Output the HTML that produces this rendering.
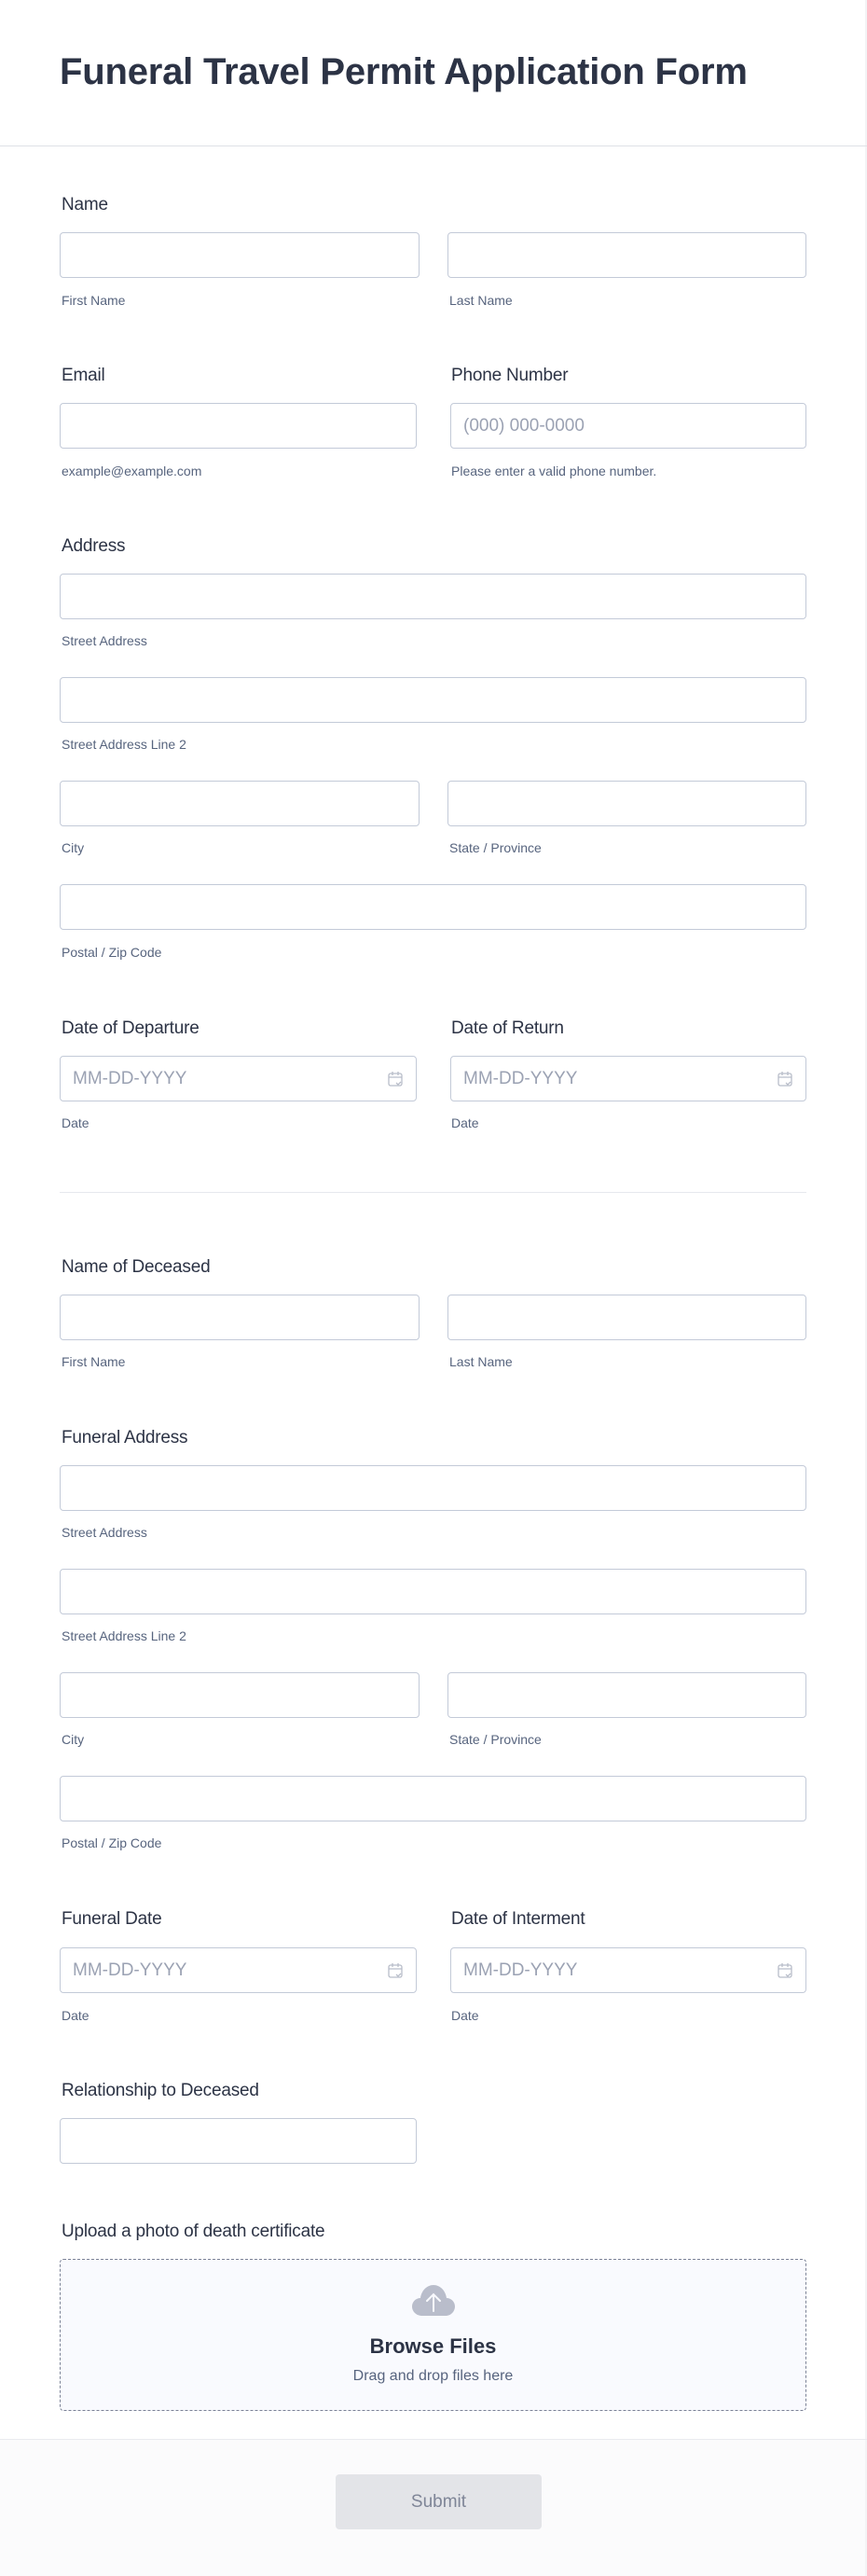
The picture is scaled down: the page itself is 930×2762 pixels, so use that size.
<!DOCTYPE html>
<html><head><meta charset="utf-8"><style>
*{margin:0;padding:0;box-sizing:border-box}
body{width:930px;height:2762px;background:#fff;font-family:"Liberation Sans",sans-serif;position:relative;overflow:hidden}
.a{position:absolute}
h1{position:absolute;left:64px;top:55px;font-size:40px;font-weight:700;color:#2c3345;letter-spacing:-0.2px;white-space:nowrap}
.hl{position:absolute;left:0;width:930px;height:1px;background:#dfe1e6}
.lb{position:absolute;font-size:19px;color:#2c3345;line-height:22px;letter-spacing:-0.2px;margin-top:1px}
.sb{position:absolute;font-size:14px;color:#57647e;line-height:16px}
.in{position:absolute;height:49px;border:1px solid #c3cad8;border-radius:4px;background:#fff}
.ph{position:absolute;left:13px;top:13px;font-size:19px;color:#9ba2b3;line-height:22px}
.cal{position:absolute;right:14px;top:15px}
</style></head><body>
<div class="a" style="right:0;top:0;width:2px;height:2762px;background:#f3f3f5"></div>
<h1>Funeral Travel Permit Application Form</h1>
<div class="hl" style="top:156px"></div>

<div class="lb" style="left:66px;top:208px">Name</div>
<div class="in" style="left:64px;top:249px;width:386px"></div>
<div class="in" style="left:480px;top:249px;width:385px"></div>
<div class="sb" style="left:66px;top:314px">First Name</div>
<div class="sb" style="left:482px;top:314px">Last Name</div>

<div class="lb" style="left:66px;top:391px">Email</div>
<div class="lb" style="left:484px;top:391px">Phone Number</div>
<div class="in" style="left:64px;top:432px;width:383px"></div>
<div class="in" style="left:483px;top:432px;width:382px"><span class="ph">(000) 000-0000</span></div>
<div class="sb" style="left:66px;top:497px">example@example.com</div>
<div class="sb" style="left:484px;top:497px">Please enter a valid phone number.</div>

<div class="lb" style="left:66px;top:574px">Address</div>
<div class="in" style="left:64px;top:615px;width:801px"></div>
<div class="sb" style="left:66px;top:679px">Street Address</div>
<div class="in" style="left:64px;top:726px;width:801px"></div>
<div class="sb" style="left:66px;top:790px">Street Address Line 2</div>
<div class="in" style="left:64px;top:837px;width:386px"></div>
<div class="in" style="left:480px;top:837px;width:385px"></div>
<div class="sb" style="left:66px;top:901px">City</div>
<div class="sb" style="left:482px;top:901px">State / Province</div>
<div class="in" style="left:64px;top:948px;width:801px"></div>
<div class="sb" style="left:66px;top:1013px">Postal / Zip Code</div>

<div class="lb" style="left:66px;top:1091px">Date of Departure</div>
<div class="lb" style="left:484px;top:1091px">Date of Return</div>
<div class="in" style="left:64px;top:1132px;width:383px"><span class="ph">MM-DD-YYYY</span><svg class="cal" width="16" height="18" viewBox="0 0 16 18" fill="none" stroke="#b8bdc9" stroke-width="1.3"><rect x="1" y="3" width="14" height="13" rx="2"/><path d="M1 7h14M5 1v4M11 1v4M9 13l2 2 3-3"/></svg></div>
<div class="in" style="left:483px;top:1132px;width:382px"><span class="ph">MM-DD-YYYY</span><svg class="cal" width="16" height="18" viewBox="0 0 16 18" fill="none" stroke="#b8bdc9" stroke-width="1.3"><rect x="1" y="3" width="14" height="13" rx="2"/><path d="M1 7h14M5 1v4M11 1v4M9 13l2 2 3-3"/></svg></div>
<div class="sb" style="left:66px;top:1196px">Date</div>
<div class="sb" style="left:484px;top:1196px">Date</div>

<div class="a" style="left:64px;top:1278px;width:801px;height:1px;background:#e6e8ee"></div>

<div class="lb" style="left:66px;top:1347px">Name of Deceased</div>
<div class="in" style="left:64px;top:1388px;width:386px"></div>
<div class="in" style="left:480px;top:1388px;width:385px"></div>
<div class="sb" style="left:66px;top:1452px">First Name</div>
<div class="sb" style="left:482px;top:1452px">Last Name</div>

<div class="lb" style="left:66px;top:1530px">Funeral Address</div>
<div class="in" style="left:64px;top:1571px;width:801px"></div>
<div class="sb" style="left:66px;top:1635px">Street Address</div>
<div class="in" style="left:64px;top:1682px;width:801px"></div>
<div class="sb" style="left:66px;top:1746px">Street Address Line 2</div>
<div class="in" style="left:64px;top:1793px;width:386px"></div>
<div class="in" style="left:480px;top:1793px;width:385px"></div>
<div class="sb" style="left:66px;top:1857px">City</div>
<div class="sb" style="left:482px;top:1857px">State / Province</div>
<div class="in" style="left:64px;top:1904px;width:801px"></div>
<div class="sb" style="left:66px;top:1968px">Postal / Zip Code</div>

<div class="lb" style="left:66px;top:2046px">Funeral Date</div>
<div class="lb" style="left:484px;top:2046px">Date of Interment</div>
<div class="in" style="left:64px;top:2088px;width:383px"><span class="ph">MM-DD-YYYY</span><svg class="cal" width="16" height="18" viewBox="0 0 16 18" fill="none" stroke="#b8bdc9" stroke-width="1.3"><rect x="1" y="3" width="14" height="13" rx="2"/><path d="M1 7h14M5 1v4M11 1v4M9 13l2 2 3-3"/></svg></div>
<div class="in" style="left:483px;top:2088px;width:382px"><span class="ph">MM-DD-YYYY</span><svg class="cal" width="16" height="18" viewBox="0 0 16 18" fill="none" stroke="#b8bdc9" stroke-width="1.3"><rect x="1" y="3" width="14" height="13" rx="2"/><path d="M1 7h14M5 1v4M11 1v4M9 13l2 2 3-3"/></svg></div>
<div class="sb" style="left:66px;top:2153px">Date</div>
<div class="sb" style="left:484px;top:2153px">Date</div>

<div class="lb" style="left:66px;top:2230px">Relationship to Deceased</div>
<div class="in" style="left:64px;top:2271px;width:383px"></div>

<div class="lb" style="left:66px;top:2381px">Upload a photo of death certificate</div>
<div class="a" style="left:64px;top:2422px;width:801px;height:163px;border:1px dashed #7b8296;border-radius:4px;background:#f9fafe"></div>
<svg class="a" style="left:441px;top:2449px" width="48" height="36" viewBox="0 0 48 36"><path d="M12 34C5 34 1 29 1 24c0-5 4-9 9-9 1-8 7-14 14-14s13 6 14 14c5 0 9 4 9 9s-4 10-10 10z" fill="#b9bdcb"/><path d="M24 29V11M17 18l7-7 7 7" stroke="#f9fafe" stroke-width="2" fill="none" stroke-linecap="round"/></svg>
<div class="a" style="left:64px;top:2503px;width:801px;text-align:center;font-size:22px;font-weight:700;color:#2c3345">Browse Files</div>
<div class="a" style="left:64px;top:2539px;width:801px;text-align:center;font-size:16px;color:#57647e">Drag and drop files here</div>

<div class="hl" style="top:2615px;background:#eaebef"></div>
<div class="a" style="left:0;top:2616px;width:928px;height:146px;background:#fbfbfc"></div>
<div class="a" style="left:360px;top:2653px;width:221px;height:59px;background:#e3e4e8;border-radius:4px;text-align:center;line-height:59px;font-size:19px;color:#7f8597">Submit</div>
</body></html>
